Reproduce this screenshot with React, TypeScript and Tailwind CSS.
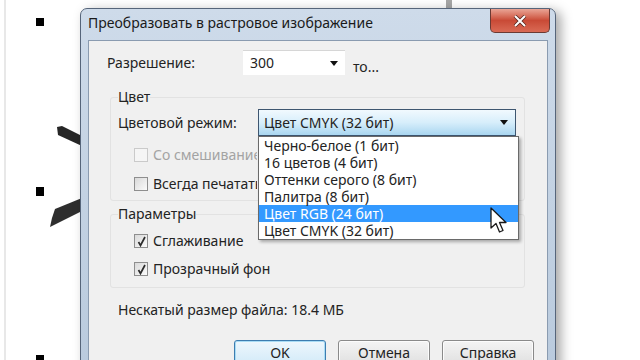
import React from 'react';

function Checkbox({ checked, disabled }: { checked?: boolean; disabled?: boolean }) {
  return (
    <span
      className={
        disabled
          ? 'flex h-[14px] w-[14px] shrink-0 items-center justify-center border border-[#cacaca] bg-[#f5f5f5]'
          : 'flex h-[14px] w-[14px] shrink-0 items-center justify-center border border-[#8e8e8e] bg-gradient-to-br from-[#d9d9d9] to-[#fbfbfb]'
      }
    >
      {checked && (
        <svg width="11" height="11" viewBox="0 0 11 11">
          <path d="M2.5 6 L4.5 9.5 L9 1" fill="none" stroke="#2b2b2b" strokeWidth="1.7" />
        </svg>
      )}
    </span>
  );
}

function Button({ label, focused }: { label: string; focused?: boolean }) {
  return (
    <div
      className={
        focused
          ? 'flex h-[28px] w-[92px] items-start justify-center rounded-[3px] border border-[#3d7db0] bg-gradient-to-b from-[#eef7fd] to-[#cfe9f8] pt-[3px] leading-[17px] shadow-[inset_0_0_0_1px_#a9dcf5]'
          : 'flex h-[28px] w-[92px] items-start justify-center rounded-[3px] border border-[#8a8a8a] bg-gradient-to-b from-[#f4f4f4] to-[#dedede] pt-[3px] leading-[17px] shadow-[inset_0_0_0_1px_#fcfcfc]'
      }
    >
      {label}
    </div>
  );
}

const items = [
  'Черно-белое (1 бит)',
  '16 цветов (4 бит)',
  'Оттенки серого (8 бит)',
  'Палитра (8 бит)',
  'Цвет RGB (24 бит)',
  'Цвет CMYK (32 бит)',
];

export default function App() {
  return (
    <div className="relative h-[360px] w-[640px] overflow-hidden bg-white font-['Noto_Sans',sans-serif] text-[14px] leading-[20px] text-[#232323]">
      {/* page behind the dialog */}
      <div className="absolute left-[4px] top-0 h-full w-[2px] bg-[#e8e8e8]" />
      <div className="absolute left-[36px] top-[18px] h-[8px] w-[8px] bg-black" />
      <div className="absolute left-[36px] top-[187px] h-[9px] w-[8px] bg-black" />
      <div className="absolute left-[36px] top-[355px] h-[8px] w-[8px] bg-black" />
      <svg className="absolute left-0 top-0" width="90" height="240">
        <polygon points="57,127 62,126 82,136 82,146 58,135" fill="#262626" />
        <polygon points="55,209 82,198 82,211 50,227 52,218" fill="#2e2e2e" />
      </svg>
      <div className="absolute left-[446px] top-0 h-[10px] w-[6px] bg-[#a7a7a7]" />

      {/* dialog window */}
      <div className="absolute left-[80px] top-[8px] flex h-[372px] w-[476px] flex-col rounded-t-[7px] border border-[#56657a] bg-gradient-to-b from-[#cedbea] via-[#c3d2e3] to-[#b9cadd] px-[7px] shadow-[5px_3px_12px_rgba(0,0,0,0.35)]">
        <div className="flex h-[31px] items-start">
          <span className="pt-[4px] text-[#1a1a1a]">Преобразовать в растровое изображение</span>
          <div className="-mr-[2px] ml-auto flex h-[24px] w-[60px] items-center justify-center rounded-b-[5px] border border-t-0 border-[#6b3a33] bg-gradient-to-b from-[#e9a596] via-[#c94a36] to-[#d96a55]">
            <svg width="14" height="12" viewBox="0 0 14 12">
              <path d="M2 1 L12 11 M12 1 L2 11" stroke="#5a2a22" strokeWidth="3.6" />
              <path d="M2 1 L12 11 M12 1 L2 11" stroke="#ffffff" strokeWidth="2" />
            </svg>
          </div>
        </div>

        <div className="relative flex-1 border border-[#8a9bb0] bg-[#f0f0f0]">
          <div className="mt-[9px] flex h-[25px] items-center pl-[18px]">
            <span className="w-[136px]">Разрешение:</span>
            <div className="flex h-[25px] w-[102px] items-center border-t border-[#d6d6d6] bg-white pl-[7px] pr-[7px]">
              <span>300</span>
              <svg className="ml-auto" width="8" height="5" viewBox="0 0 8 5">
                <path d="M0 0 H8 L4 5 Z" fill="#111" />
              </svg>
            </div>
            <span className="ml-[8px] mt-[8px]">то...</span>
          </div>

          <fieldset className="ml-[21px] mt-[12px] w-[415px] rounded-[3px] border border-[#e2e2e2] px-[7px] pb-[6px]">
            <legend>Цвет</legend>
            <div className="mt-[2px] flex h-[27px] items-center">
              <span className="w-[140px]">Цветовой режим:</span>
              <div className="flex h-[27px] w-[258px] items-center border border-[#3e5670] bg-gradient-to-b from-[#f1f9fe] via-[#d7eefb] to-[#a9d6f0] pl-[5px] pr-[7px]">
                <span>Цвет CMYK (32 бит)</span>
                <svg className="ml-auto" width="8" height="5" viewBox="0 0 8 5">
                  <path d="M0 0 H8 L4 5 Z" fill="#111" />
                </svg>
              </div>
            </div>
            <div className="ml-[16px] mt-[9px] flex h-[20px] items-center gap-[5px] text-[#a3a3a3]">
              <Checkbox disabled />
              <span className="w-[104px] overflow-hidden whitespace-nowrap">Со смешиванием</span>
            </div>
            <div className="ml-[16px] mt-[9px] flex h-[20px] items-center gap-[5px]">
              <Checkbox />
              <span className="w-[104px] overflow-hidden whitespace-nowrap">Всегда печатать черным</span>
            </div>
          </fieldset>

          <fieldset className="ml-[21px] mt-[3px] w-[415px] rounded-[3px] border border-[#e2e2e2] px-[7px] pb-[8px]">
            <legend>Параметры</legend>
            <div className="ml-[16px] mt-[7px] flex h-[20px] items-center gap-[5px]">
              <Checkbox checked />
              <span>Сглаживание</span>
            </div>
            <div className="ml-[16px] mt-[8px] flex h-[20px] items-center gap-[5px]">
              <Checkbox checked />
              <span>Прозрачный фон</span>
            </div>
          </fieldset>

          <div className="mt-[12px] pl-[29px]">Нескатый размер файла: 18.4 МБ</div>

          <div className="mt-[20px] flex justify-end gap-[12px] pr-[13px]">
            <Button label="OK" focused />
            <Button label="Отмена" />
            <Button label="Справка" />
          </div>

          {/* open drop-down list */}
          <div className="absolute left-[169px] top-[95px] w-[261px] border border-[#6a6a6a] bg-white shadow-[2px_2px_3px_rgba(0,0,0,0.3)]">
            {items.map((t, i) => (
              <div
                key={t}
                className={
                  i === 4
                    ? 'h-[17px] bg-[#3399ff] pl-[5px] leading-[17px] text-white'
                    : 'h-[17px] pl-[5px] leading-[17px]'
                }
              >
                {t}
              </div>
            ))}
          </div>
        </div>
      </div>

      {/* mouse pointer */}
      <svg className="absolute left-[490px] top-[207px]" width="18" height="28" viewBox="0 0 18 28">
        <path
          d="M1 1 L1 21 L6 16.5 L9.5 25 L13 23.5 L9.5 15.5 L16 15.5 Z"
          fill="#ffffff"
          stroke="#1a1a1a"
          strokeWidth="1.3"
          strokeLinejoin="round"
        />
      </svg>
    </div>
  );
}
